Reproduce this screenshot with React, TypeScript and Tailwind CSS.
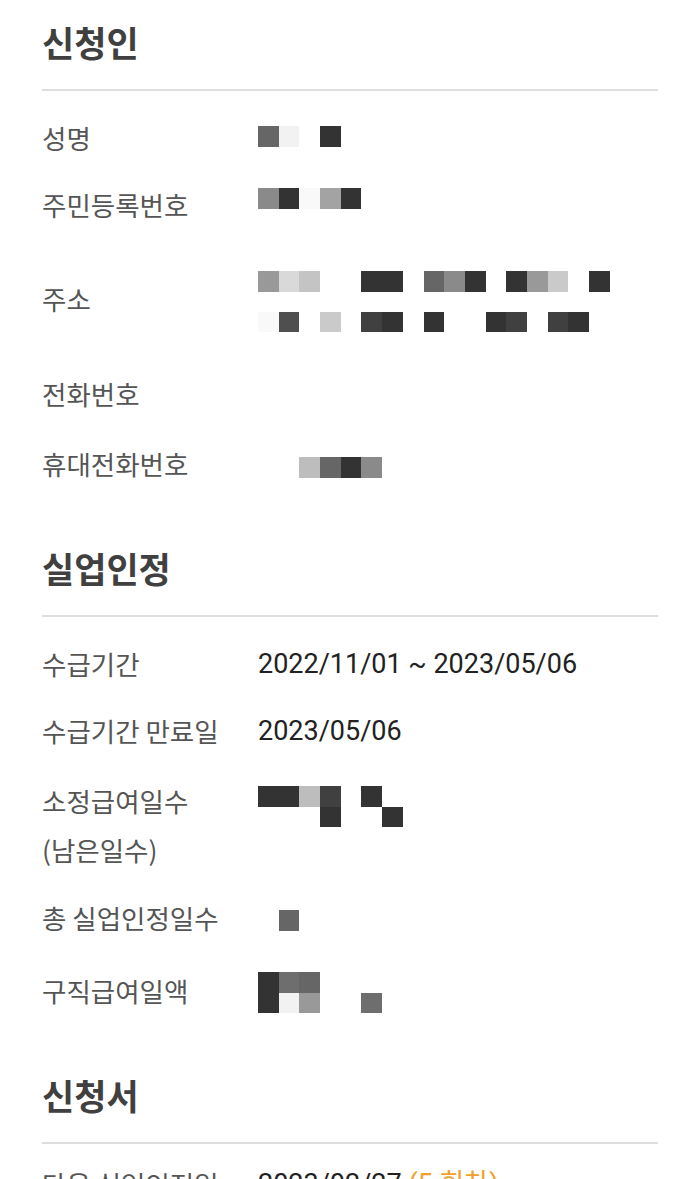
import React from "react";

const C: Record<string, string> = {
  a: "bg-[#333333]",
  b: "bg-[#404040]",
  c: "bg-[#4f4f4f]",
  g: "bg-[#666666]",
  h: "bg-[#6e6e6e]",
  m: "bg-[#8a8a8a]",
  n: "bg-[#999999]",
  o: "bg-[#a3a3a3]",
  p: "bg-[#bdbdbd]",
  q: "bg-[#c4c4c4]",
  r: "bg-[#cacaca]",
  s: "bg-[#d9d9d9]",
  t: "bg-[#f2f2f2]",
  u: "bg-[#f9f9f9]",
  ".": "",
};

function Mosaic({ rows, gap = "" }: { rows: string[]; gap?: string }) {
  return (
    <div className={`flex flex-col ${gap}`}>
      {rows.map((r, i) => (
        <div key={i} className="flex">
          {[...r].map((ch, j) => (
            <div key={j} className={`w-[20.7px] h-[20.7px] shrink-0 ${C[ch]}`} />
          ))}
        </div>
      ))}
    </div>
  );
}

const LABEL = "w-[216px] shrink-0 text-[26.5px] leading-[40px] text-[#555555] whitespace-nowrap";
const VALUE =
  "text-[27px] leading-[40px] text-[#222222] whitespace-nowrap [font-family:Roboto,'Noto_Sans_CJK_KR',sans-serif]";

function Title({ children, cls }: { children: React.ReactNode; cls: string }) {
  return (
    <>
      <h2 className={`text-[35px] leading-[48px] font-bold text-[#404040] ${cls}`}>{children}</h2>
      <div className="mt-[23px] h-[2px] bg-[#dedede]" />
    </>
  );
}

export default function App() {
  return (
    <div
      className="w-[700px] h-[1179px] overflow-hidden bg-white px-[42px] pt-[18px]"
      style={{ fontFamily: "'Noto Sans CJK KR', 'Noto Sans', sans-serif" }}
    >
      <Title cls="">신청인</Title>

      <div className="mt-[3px] h-[67px] flex items-start">
        <div className={`${LABEL} mt-[24px]`}>성명</div>
        <div className="mt-[32px]">
          <Mosaic rows={["gt.a"]} />
        </div>
      </div>
      <div className="h-[84px] flex items-start">
        <div className={`${LABEL} mt-[24px]`}>주민등록번호</div>
        <div className="mt-[27px]">
          <Mosaic rows={["mauoa"]} />
        </div>
      </div>
      <div className="h-[105px] flex items-start">
        <div className={`${LABEL} mt-[34px]`}>주소</div>
        <div className="mt-[26px]">
          <Mosaic gap="gap-[20px]" rows={["nsq..aa.gma.anr.a", "uc.r.ba.a..ab.ba"]} />
        </div>
      </div>
      <div className="h-[70px] flex items-start">
        <div className={`${LABEL} mt-[24px]`}>전화번호</div>
      </div>
      <div className="h-[70px] flex items-start">
        <div className={`${LABEL} mt-[24px]`}>휴대전화번호</div>
        <div className="mt-[37px]">
          <Mosaic rows={["..pgam"]} />
        </div>
      </div>

      <Title cls="mt-[54px]">실업인정</Title>

      <div className="mt-[3px] h-[67px] flex items-start">
        <div className={`${LABEL} mt-[24px]`}>수급기간</div>
        <div className={`${VALUE} mt-[24px]`}>2022/11/01 ~ 2023/05/06</div>
      </div>
      <div className="h-[65px] flex items-start">
        <div className={`${LABEL} mt-[24px]`}>수급기간 만료일</div>
        <div className={`${VALUE} mt-[24px]`}>2023/05/06</div>
      </div>
      <div className="h-[122px] flex items-start">
        <div className="w-[216px] shrink-0 text-[26.5px] leading-[49px] text-[#555555] mt-[24px]">
          <div>소정급여일수</div>
          <div>(남은일수)</div>
        </div>
        <div className="mt-[34px]">
          <Mosaic rows={["aapb.a.", "...a..a"]} />
        </div>
      </div>
      <div className="h-[73px] flex items-start">
        <div className={`${LABEL} mt-[24px]`}>총 실업인정일수</div>
        <div className="mt-[36px]">
          <Mosaic rows={[".g"]} />
        </div>
      </div>
      <div className="h-[70px] flex items-start">
        <div className={`${LABEL} mt-[24px]`}>구직급여일액</div>
        <div className="mt-[25px]">
          <Mosaic rows={["ahg...", "atn..h"]} />
        </div>
      </div>

      <Title cls="mt-[54px]">신청서</Title>

      <div className="h-[70px] flex items-start">
        <div className={`${LABEL} mt-[20px]`}>다음 실업인정일</div>
        <div className={`${VALUE} mt-[20px]`}>
          2023/02/27 <span className="text-[#f0a12b]">(5 회차)</span>
        </div>
      </div>
    </div>
  );
}
